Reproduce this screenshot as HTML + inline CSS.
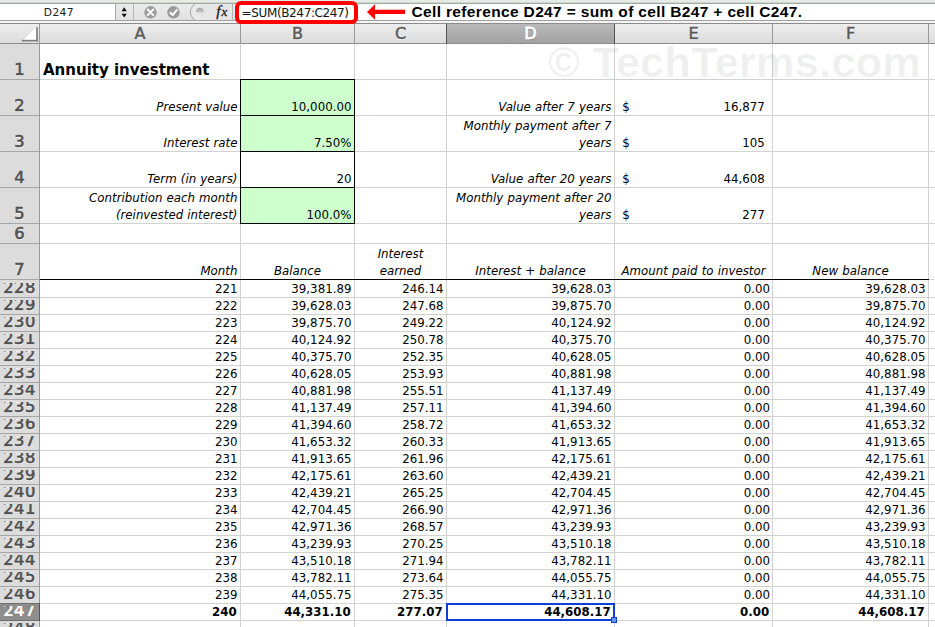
<!DOCTYPE html>
<html><head><meta charset="utf-8"><title>Annuity investment</title>
<style>
html,body{margin:0;padding:0;}
body{width:935px;height:627px;overflow:hidden;background:#fff;position:relative;font-family:"DejaVu Sans","Liberation Sans",sans-serif;color:#000;}
div{position:absolute;box-sizing:border-box;}
.t{line-height:20px;height:20px;white-space:nowrap;}
.i{font-style:italic;word-spacing:0.4px;}
.b{font-weight:bold;}
.vl{width:1px;background:#d2d2d2;}
.hl{height:1px;background:#d2d2d2;}
.ch{color:#5a5a5a;text-shadow:0 1px 0 #fff;-webkit-text-stroke:0.5px #5a5a5a;}
.rh{color:#505050;text-shadow:0 1px 0 #fff;-webkit-text-stroke:0.6px #505050;letter-spacing:0.55px;}
.wm{font-family:"Liberation Sans",sans-serif;font-weight:bold;color:rgba(0,0,0,0.065);}
.note{font-family:"Liberation Sans",sans-serif;font-weight:bold;color:#000;}
</style></head><body>

<div class="vl" style="left:240px;top:44px;height:583px"></div>
<div class="vl" style="left:354px;top:44px;height:583px"></div>
<div class="vl" style="left:446px;top:44px;height:583px"></div>
<div class="vl" style="left:614px;top:44px;height:583px"></div>
<div class="vl" style="left:772px;top:44px;height:583px"></div>
<div class="vl" style="left:928px;top:44px;height:583px"></div>
<div class="hl" style="left:40px;top:79px;width:895px"></div>
<div class="hl" style="left:40px;top:115px;width:895px"></div>
<div class="hl" style="left:40px;top:151px;width:895px"></div>
<div class="hl" style="left:40px;top:187px;width:895px"></div>
<div class="hl" style="left:40px;top:223px;width:895px"></div>
<div class="hl" style="left:40px;top:243px;width:895px"></div>
<div class="hl" style="left:40px;top:279px;width:895px"></div>
<div class="hl" style="left:40px;top:297px;width:895px"></div>
<div class="hl" style="left:40px;top:314px;width:895px"></div>
<div class="hl" style="left:40px;top:331px;width:895px"></div>
<div class="hl" style="left:40px;top:348px;width:895px"></div>
<div class="hl" style="left:40px;top:365px;width:895px"></div>
<div class="hl" style="left:40px;top:382px;width:895px"></div>
<div class="hl" style="left:40px;top:399px;width:895px"></div>
<div class="hl" style="left:40px;top:416px;width:895px"></div>
<div class="hl" style="left:40px;top:433px;width:895px"></div>
<div class="hl" style="left:40px;top:450px;width:895px"></div>
<div class="hl" style="left:40px;top:467px;width:895px"></div>
<div class="hl" style="left:40px;top:484px;width:895px"></div>
<div class="hl" style="left:40px;top:501px;width:895px"></div>
<div class="hl" style="left:40px;top:518px;width:895px"></div>
<div class="hl" style="left:40px;top:535px;width:895px"></div>
<div class="hl" style="left:40px;top:552px;width:895px"></div>
<div class="hl" style="left:40px;top:569px;width:895px"></div>
<div class="hl" style="left:40px;top:586px;width:895px"></div>
<div class="hl" style="left:40px;top:603px;width:895px"></div>
<div class="hl" style="left:40px;top:620px;width:895px"></div>
<div style="left:240px;top:79px;width:115px;height:145px;background:#000"></div>
<div style="left:241px;top:80px;width:113px;height:35px;background:#ccffcc"></div>
<div style="left:241px;top:116px;width:113px;height:35px;background:#ccffcc"></div>
<div style="left:241px;top:152px;width:113px;height:35px;background:#fff"></div>
<div style="left:241px;top:188px;width:113px;height:35px;background:#ccffcc"></div>
<div style="left:40px;top:279px;width:889px;height:1px;background:#000"></div>
<div class="t b" style="top:59.51px;font-size:15px;left:43.00px;">Annuity investment</div>
<div class="t i" style="top:96.62px;font-size:11.8px;right:697.60px;">Present value</div>
<div class="t i" style="top:132.62px;font-size:11.8px;right:697.60px;">Interest rate</div>
<div class="t i" style="top:168.62px;font-size:11.8px;right:697.60px;">Term (in years)</div>
<div class="t i" style="top:187.62px;font-size:11.8px;right:697.60px;">Contribution each month</div>
<div class="t i" style="top:204.62px;font-size:11.8px;right:697.60px;">(reinvested interest)</div>
<div class="t " style="top:96.62px;font-size:11.8px;right:583.60px;">10,000.00</div>
<div class="t " style="top:132.62px;font-size:11.8px;right:583.60px;">7.50%</div>
<div class="t " style="top:168.62px;font-size:11.8px;right:583.60px;">20</div>
<div class="t " style="top:204.62px;font-size:11.8px;right:583.60px;">100.0%</div>
<div class="t i" style="top:96.62px;font-size:11.8px;right:323.60px;">Value after 7 years</div>
<div class="t i" style="top:115.62px;font-size:11.8px;right:323.60px;">Monthly payment after 7</div>
<div class="t i" style="top:132.62px;font-size:11.8px;right:323.60px;">years</div>
<div class="t i" style="top:168.62px;font-size:11.8px;right:323.60px;">Value after 20 years</div>
<div class="t i" style="top:187.62px;font-size:11.8px;right:323.60px;">Monthly payment after 20</div>
<div class="t i" style="top:204.62px;font-size:11.8px;right:323.60px;">years</div>
<div class="t " style="top:96.62px;font-size:11.8px;left:622.20px;">$</div>
<div class="t " style="top:96.62px;font-size:11.8px;right:170.30px;">16,877</div>
<div class="t " style="top:132.62px;font-size:11.8px;left:622.20px;">$</div>
<div class="t " style="top:132.62px;font-size:11.8px;right:170.30px;">105</div>
<div class="t " style="top:168.62px;font-size:11.8px;left:622.20px;">$</div>
<div class="t " style="top:168.62px;font-size:11.8px;right:170.30px;">44,608</div>
<div class="t " style="top:204.62px;font-size:11.8px;left:622.20px;">$</div>
<div class="t " style="top:204.62px;font-size:11.8px;right:170.30px;">277</div>
<div class="t i" style="top:260.62px;font-size:11.8px;right:697.60px;">Month</div>
<div class="t i" style="top:260.62px;font-size:11.8px;left:97.50px;width:400px;text-align:center;">Balance</div>
<div class="t i" style="top:243.62px;font-size:11.8px;left:200.50px;width:400px;text-align:center;">Interest</div>
<div class="t i" style="top:260.62px;font-size:11.8px;left:200.50px;width:400px;text-align:center;">earned</div>
<div class="t i" style="top:260.62px;font-size:11.8px;left:330.50px;width:400px;text-align:center;">Interest + balance</div>
<div class="t i" style="top:260.62px;font-size:11.8px;left:493.50px;width:400px;text-align:center;">Amount paid to investor</div>
<div class="t i" style="top:260.62px;font-size:11.8px;left:650.50px;width:400px;text-align:center;">New balance</div>
<div class="t " style="top:278.62px;font-size:11.8px;right:697.60px;">221</div>
<div class="t " style="top:278.62px;font-size:11.8px;right:583.60px;">39,381.89</div>
<div class="t " style="top:278.62px;font-size:11.8px;right:491.60px;">246.14</div>
<div class="t " style="top:278.62px;font-size:11.8px;right:323.60px;">39,628.03</div>
<div class="t " style="top:278.62px;font-size:11.8px;right:165.00px;">0.00</div>
<div class="t " style="top:278.62px;font-size:11.8px;right:9.60px;">39,628.03</div>
<div class="t " style="top:295.62px;font-size:11.8px;right:697.60px;">222</div>
<div class="t " style="top:295.62px;font-size:11.8px;right:583.60px;">39,628.03</div>
<div class="t " style="top:295.62px;font-size:11.8px;right:491.60px;">247.68</div>
<div class="t " style="top:295.62px;font-size:11.8px;right:323.60px;">39,875.70</div>
<div class="t " style="top:295.62px;font-size:11.8px;right:165.00px;">0.00</div>
<div class="t " style="top:295.62px;font-size:11.8px;right:9.60px;">39,875.70</div>
<div class="t " style="top:312.62px;font-size:11.8px;right:697.60px;">223</div>
<div class="t " style="top:312.62px;font-size:11.8px;right:583.60px;">39,875.70</div>
<div class="t " style="top:312.62px;font-size:11.8px;right:491.60px;">249.22</div>
<div class="t " style="top:312.62px;font-size:11.8px;right:323.60px;">40,124.92</div>
<div class="t " style="top:312.62px;font-size:11.8px;right:165.00px;">0.00</div>
<div class="t " style="top:312.62px;font-size:11.8px;right:9.60px;">40,124.92</div>
<div class="t " style="top:329.62px;font-size:11.8px;right:697.60px;">224</div>
<div class="t " style="top:329.62px;font-size:11.8px;right:583.60px;">40,124.92</div>
<div class="t " style="top:329.62px;font-size:11.8px;right:491.60px;">250.78</div>
<div class="t " style="top:329.62px;font-size:11.8px;right:323.60px;">40,375.70</div>
<div class="t " style="top:329.62px;font-size:11.8px;right:165.00px;">0.00</div>
<div class="t " style="top:329.62px;font-size:11.8px;right:9.60px;">40,375.70</div>
<div class="t " style="top:346.62px;font-size:11.8px;right:697.60px;">225</div>
<div class="t " style="top:346.62px;font-size:11.8px;right:583.60px;">40,375.70</div>
<div class="t " style="top:346.62px;font-size:11.8px;right:491.60px;">252.35</div>
<div class="t " style="top:346.62px;font-size:11.8px;right:323.60px;">40,628.05</div>
<div class="t " style="top:346.62px;font-size:11.8px;right:165.00px;">0.00</div>
<div class="t " style="top:346.62px;font-size:11.8px;right:9.60px;">40,628.05</div>
<div class="t " style="top:363.62px;font-size:11.8px;right:697.60px;">226</div>
<div class="t " style="top:363.62px;font-size:11.8px;right:583.60px;">40,628.05</div>
<div class="t " style="top:363.62px;font-size:11.8px;right:491.60px;">253.93</div>
<div class="t " style="top:363.62px;font-size:11.8px;right:323.60px;">40,881.98</div>
<div class="t " style="top:363.62px;font-size:11.8px;right:165.00px;">0.00</div>
<div class="t " style="top:363.62px;font-size:11.8px;right:9.60px;">40,881.98</div>
<div class="t " style="top:380.62px;font-size:11.8px;right:697.60px;">227</div>
<div class="t " style="top:380.62px;font-size:11.8px;right:583.60px;">40,881.98</div>
<div class="t " style="top:380.62px;font-size:11.8px;right:491.60px;">255.51</div>
<div class="t " style="top:380.62px;font-size:11.8px;right:323.60px;">41,137.49</div>
<div class="t " style="top:380.62px;font-size:11.8px;right:165.00px;">0.00</div>
<div class="t " style="top:380.62px;font-size:11.8px;right:9.60px;">41,137.49</div>
<div class="t " style="top:397.62px;font-size:11.8px;right:697.60px;">228</div>
<div class="t " style="top:397.62px;font-size:11.8px;right:583.60px;">41,137.49</div>
<div class="t " style="top:397.62px;font-size:11.8px;right:491.60px;">257.11</div>
<div class="t " style="top:397.62px;font-size:11.8px;right:323.60px;">41,394.60</div>
<div class="t " style="top:397.62px;font-size:11.8px;right:165.00px;">0.00</div>
<div class="t " style="top:397.62px;font-size:11.8px;right:9.60px;">41,394.60</div>
<div class="t " style="top:414.62px;font-size:11.8px;right:697.60px;">229</div>
<div class="t " style="top:414.62px;font-size:11.8px;right:583.60px;">41,394.60</div>
<div class="t " style="top:414.62px;font-size:11.8px;right:491.60px;">258.72</div>
<div class="t " style="top:414.62px;font-size:11.8px;right:323.60px;">41,653.32</div>
<div class="t " style="top:414.62px;font-size:11.8px;right:165.00px;">0.00</div>
<div class="t " style="top:414.62px;font-size:11.8px;right:9.60px;">41,653.32</div>
<div class="t " style="top:431.62px;font-size:11.8px;right:697.60px;">230</div>
<div class="t " style="top:431.62px;font-size:11.8px;right:583.60px;">41,653.32</div>
<div class="t " style="top:431.62px;font-size:11.8px;right:491.60px;">260.33</div>
<div class="t " style="top:431.62px;font-size:11.8px;right:323.60px;">41,913.65</div>
<div class="t " style="top:431.62px;font-size:11.8px;right:165.00px;">0.00</div>
<div class="t " style="top:431.62px;font-size:11.8px;right:9.60px;">41,913.65</div>
<div class="t " style="top:448.62px;font-size:11.8px;right:697.60px;">231</div>
<div class="t " style="top:448.62px;font-size:11.8px;right:583.60px;">41,913.65</div>
<div class="t " style="top:448.62px;font-size:11.8px;right:491.60px;">261.96</div>
<div class="t " style="top:448.62px;font-size:11.8px;right:323.60px;">42,175.61</div>
<div class="t " style="top:448.62px;font-size:11.8px;right:165.00px;">0.00</div>
<div class="t " style="top:448.62px;font-size:11.8px;right:9.60px;">42,175.61</div>
<div class="t " style="top:465.62px;font-size:11.8px;right:697.60px;">232</div>
<div class="t " style="top:465.62px;font-size:11.8px;right:583.60px;">42,175.61</div>
<div class="t " style="top:465.62px;font-size:11.8px;right:491.60px;">263.60</div>
<div class="t " style="top:465.62px;font-size:11.8px;right:323.60px;">42,439.21</div>
<div class="t " style="top:465.62px;font-size:11.8px;right:165.00px;">0.00</div>
<div class="t " style="top:465.62px;font-size:11.8px;right:9.60px;">42,439.21</div>
<div class="t " style="top:482.62px;font-size:11.8px;right:697.60px;">233</div>
<div class="t " style="top:482.62px;font-size:11.8px;right:583.60px;">42,439.21</div>
<div class="t " style="top:482.62px;font-size:11.8px;right:491.60px;">265.25</div>
<div class="t " style="top:482.62px;font-size:11.8px;right:323.60px;">42,704.45</div>
<div class="t " style="top:482.62px;font-size:11.8px;right:165.00px;">0.00</div>
<div class="t " style="top:482.62px;font-size:11.8px;right:9.60px;">42,704.45</div>
<div class="t " style="top:499.62px;font-size:11.8px;right:697.60px;">234</div>
<div class="t " style="top:499.62px;font-size:11.8px;right:583.60px;">42,704.45</div>
<div class="t " style="top:499.62px;font-size:11.8px;right:491.60px;">266.90</div>
<div class="t " style="top:499.62px;font-size:11.8px;right:323.60px;">42,971.36</div>
<div class="t " style="top:499.62px;font-size:11.8px;right:165.00px;">0.00</div>
<div class="t " style="top:499.62px;font-size:11.8px;right:9.60px;">42,971.36</div>
<div class="t " style="top:516.62px;font-size:11.8px;right:697.60px;">235</div>
<div class="t " style="top:516.62px;font-size:11.8px;right:583.60px;">42,971.36</div>
<div class="t " style="top:516.62px;font-size:11.8px;right:491.60px;">268.57</div>
<div class="t " style="top:516.62px;font-size:11.8px;right:323.60px;">43,239.93</div>
<div class="t " style="top:516.62px;font-size:11.8px;right:165.00px;">0.00</div>
<div class="t " style="top:516.62px;font-size:11.8px;right:9.60px;">43,239.93</div>
<div class="t " style="top:533.62px;font-size:11.8px;right:697.60px;">236</div>
<div class="t " style="top:533.62px;font-size:11.8px;right:583.60px;">43,239.93</div>
<div class="t " style="top:533.62px;font-size:11.8px;right:491.60px;">270.25</div>
<div class="t " style="top:533.62px;font-size:11.8px;right:323.60px;">43,510.18</div>
<div class="t " style="top:533.62px;font-size:11.8px;right:165.00px;">0.00</div>
<div class="t " style="top:533.62px;font-size:11.8px;right:9.60px;">43,510.18</div>
<div class="t " style="top:550.62px;font-size:11.8px;right:697.60px;">237</div>
<div class="t " style="top:550.62px;font-size:11.8px;right:583.60px;">43,510.18</div>
<div class="t " style="top:550.62px;font-size:11.8px;right:491.60px;">271.94</div>
<div class="t " style="top:550.62px;font-size:11.8px;right:323.60px;">43,782.11</div>
<div class="t " style="top:550.62px;font-size:11.8px;right:165.00px;">0.00</div>
<div class="t " style="top:550.62px;font-size:11.8px;right:9.60px;">43,782.11</div>
<div class="t " style="top:567.62px;font-size:11.8px;right:697.60px;">238</div>
<div class="t " style="top:567.62px;font-size:11.8px;right:583.60px;">43,782.11</div>
<div class="t " style="top:567.62px;font-size:11.8px;right:491.60px;">273.64</div>
<div class="t " style="top:567.62px;font-size:11.8px;right:323.60px;">44,055.75</div>
<div class="t " style="top:567.62px;font-size:11.8px;right:165.00px;">0.00</div>
<div class="t " style="top:567.62px;font-size:11.8px;right:9.60px;">44,055.75</div>
<div class="t " style="top:584.62px;font-size:11.8px;right:697.60px;">239</div>
<div class="t " style="top:584.62px;font-size:11.8px;right:583.60px;">44,055.75</div>
<div class="t " style="top:584.62px;font-size:11.8px;right:491.60px;">275.35</div>
<div class="t " style="top:584.62px;font-size:11.8px;right:323.60px;">44,331.10</div>
<div class="t " style="top:584.62px;font-size:11.8px;right:165.00px;">0.00</div>
<div class="t " style="top:584.62px;font-size:11.8px;right:9.60px;">44,331.10</div>
<div class="t b" style="top:601.62px;font-size:11.8px;right:698.40px;">240</div>
<div class="t b" style="top:601.62px;font-size:11.8px;right:584.40px;">44,331.10</div>
<div class="t b" style="top:601.62px;font-size:11.8px;right:492.40px;">277.07</div>
<div class="t b" style="top:601.62px;font-size:11.8px;right:324.40px;">44,608.17</div>
<div class="t b" style="top:601.62px;font-size:11.8px;right:165.80px;">0.00</div>
<div class="t b" style="top:601.62px;font-size:11.8px;right:10.40px;">44,608.17</div>
<div class="t wm" style="top:52.32px;font-size:43px;left:548.00px;letter-spacing:0.4px;line-height:20px;">© TechTerms.com</div>
<div style="left:446px;top:603px;width:169px;height:18px;border:2px solid #0b40d2"></div>
<div style="left:611px;top:617px;width:6px;height:6px;background:#5f9be6;border:1.5px solid #0b40d2"></div>
<div style="left:0;top:44px;width:39px;height:583px;background:#dcdcdc"></div>
<div style="left:39px;top:24px;width:1px;height:603px;background:#999"></div>
<div style="left:0;top:79px;width:39px;height:1px;background:#a6a6a6"></div>
<div style="left:0;top:115px;width:39px;height:1px;background:#a6a6a6"></div>
<div style="left:0;top:151px;width:39px;height:1px;background:#a6a6a6"></div>
<div style="left:0;top:187px;width:39px;height:1px;background:#a6a6a6"></div>
<div style="left:0;top:223px;width:39px;height:1px;background:#a6a6a6"></div>
<div style="left:0;top:243px;width:39px;height:1px;background:#a6a6a6"></div>
<div style="left:0;top:279px;width:39px;height:1px;background:#a6a6a6"></div>
<div style="left:0;top:297px;width:39px;height:1px;background:#a6a6a6"></div>
<div style="left:0;top:314px;width:39px;height:1px;background:#a6a6a6"></div>
<div style="left:0;top:331px;width:39px;height:1px;background:#a6a6a6"></div>
<div style="left:0;top:348px;width:39px;height:1px;background:#a6a6a6"></div>
<div style="left:0;top:365px;width:39px;height:1px;background:#a6a6a6"></div>
<div style="left:0;top:382px;width:39px;height:1px;background:#a6a6a6"></div>
<div style="left:0;top:399px;width:39px;height:1px;background:#a6a6a6"></div>
<div style="left:0;top:416px;width:39px;height:1px;background:#a6a6a6"></div>
<div style="left:0;top:433px;width:39px;height:1px;background:#a6a6a6"></div>
<div style="left:0;top:450px;width:39px;height:1px;background:#a6a6a6"></div>
<div style="left:0;top:467px;width:39px;height:1px;background:#a6a6a6"></div>
<div style="left:0;top:484px;width:39px;height:1px;background:#a6a6a6"></div>
<div style="left:0;top:501px;width:39px;height:1px;background:#a6a6a6"></div>
<div style="left:0;top:518px;width:39px;height:1px;background:#a6a6a6"></div>
<div style="left:0;top:535px;width:39px;height:1px;background:#a6a6a6"></div>
<div style="left:0;top:552px;width:39px;height:1px;background:#a6a6a6"></div>
<div style="left:0;top:569px;width:39px;height:1px;background:#a6a6a6"></div>
<div style="left:0;top:586px;width:39px;height:1px;background:#a6a6a6"></div>
<div style="left:0;top:603px;width:39px;height:1px;background:#a6a6a6"></div>
<div style="left:0;top:620px;width:39px;height:1px;background:#a6a6a6"></div>
<div class="t rh" style="top:59.96px;font-size:16.3px;left:-180.20px;width:400px;text-align:center;">1</div>
<div class="t rh" style="top:95.96px;font-size:16.3px;left:-180.20px;width:400px;text-align:center;">2</div>
<div class="t rh" style="top:131.96px;font-size:16.3px;left:-180.20px;width:400px;text-align:center;">3</div>
<div class="t rh" style="top:167.96px;font-size:16.3px;left:-180.20px;width:400px;text-align:center;">4</div>
<div class="t rh" style="top:203.96px;font-size:16.3px;left:-180.20px;width:400px;text-align:center;">5</div>
<div class="t rh" style="top:223.96px;font-size:16.3px;left:-180.20px;width:400px;text-align:center;">6</div>
<div class="t rh" style="top:259.96px;font-size:16.3px;left:-180.20px;width:400px;text-align:center;">7</div>
<div style="left:0;top:283px;width:39px;height:14px;overflow:hidden">
<div class="t rh" style="left:0;width:39px;text-align:center;top:-5.04px;font-size:16.3px;">228</div></div>
<div style="left:0;top:300px;width:39px;height:14px;overflow:hidden">
<div class="t rh" style="left:0;width:39px;text-align:center;top:-5.04px;font-size:16.3px;">229</div></div>
<div style="left:0;top:317px;width:39px;height:14px;overflow:hidden">
<div class="t rh" style="left:0;width:39px;text-align:center;top:-5.04px;font-size:16.3px;">230</div></div>
<div style="left:0;top:334px;width:39px;height:14px;overflow:hidden">
<div class="t rh" style="left:0;width:39px;text-align:center;top:-5.04px;font-size:16.3px;">231</div></div>
<div style="left:0;top:351px;width:39px;height:14px;overflow:hidden">
<div class="t rh" style="left:0;width:39px;text-align:center;top:-5.04px;font-size:16.3px;">232</div></div>
<div style="left:0;top:368px;width:39px;height:14px;overflow:hidden">
<div class="t rh" style="left:0;width:39px;text-align:center;top:-5.04px;font-size:16.3px;">233</div></div>
<div style="left:0;top:385px;width:39px;height:14px;overflow:hidden">
<div class="t rh" style="left:0;width:39px;text-align:center;top:-5.04px;font-size:16.3px;">234</div></div>
<div style="left:0;top:402px;width:39px;height:14px;overflow:hidden">
<div class="t rh" style="left:0;width:39px;text-align:center;top:-5.04px;font-size:16.3px;">235</div></div>
<div style="left:0;top:419px;width:39px;height:14px;overflow:hidden">
<div class="t rh" style="left:0;width:39px;text-align:center;top:-5.04px;font-size:16.3px;">236</div></div>
<div style="left:0;top:436px;width:39px;height:14px;overflow:hidden">
<div class="t rh" style="left:0;width:39px;text-align:center;top:-5.04px;font-size:16.3px;">237</div></div>
<div style="left:0;top:453px;width:39px;height:14px;overflow:hidden">
<div class="t rh" style="left:0;width:39px;text-align:center;top:-5.04px;font-size:16.3px;">238</div></div>
<div style="left:0;top:470px;width:39px;height:14px;overflow:hidden">
<div class="t rh" style="left:0;width:39px;text-align:center;top:-5.04px;font-size:16.3px;">239</div></div>
<div style="left:0;top:487px;width:39px;height:14px;overflow:hidden">
<div class="t rh" style="left:0;width:39px;text-align:center;top:-5.04px;font-size:16.3px;">240</div></div>
<div style="left:0;top:504px;width:39px;height:14px;overflow:hidden">
<div class="t rh" style="left:0;width:39px;text-align:center;top:-5.04px;font-size:16.3px;">241</div></div>
<div style="left:0;top:521px;width:39px;height:14px;overflow:hidden">
<div class="t rh" style="left:0;width:39px;text-align:center;top:-5.04px;font-size:16.3px;">242</div></div>
<div style="left:0;top:538px;width:39px;height:14px;overflow:hidden">
<div class="t rh" style="left:0;width:39px;text-align:center;top:-5.04px;font-size:16.3px;">243</div></div>
<div style="left:0;top:555px;width:39px;height:14px;overflow:hidden">
<div class="t rh" style="left:0;width:39px;text-align:center;top:-5.04px;font-size:16.3px;">244</div></div>
<div style="left:0;top:572px;width:39px;height:14px;overflow:hidden">
<div class="t rh" style="left:0;width:39px;text-align:center;top:-5.04px;font-size:16.3px;">245</div></div>
<div style="left:0;top:589px;width:39px;height:14px;overflow:hidden">
<div class="t rh" style="left:0;width:39px;text-align:center;top:-5.04px;font-size:16.3px;">246</div></div>
<div style="left:0;top:604px;width:39px;height:16px;background:#8e8e8e"></div>
<div style="left:0;top:606px;width:39px;height:14px;overflow:hidden">
<div class="t rh" style="left:0;width:39px;text-align:center;top:-5.04px;font-size:16.3px;color:#fff;text-shadow:0 1px 1px #555;-webkit-text-stroke:0.7px #fff;">247</div></div>
<div style="left:0;top:623px;width:39px;height:14px;overflow:hidden">
<div class="t rh" style="left:0;width:39px;text-align:center;top:-5.04px;font-size:16.3px;">248</div></div>
<div style="left:39px;top:603px;width:1px;height:18px;background:#555"></div>
<div style="left:0;top:603px;width:39px;height:1px;background:#6e6e6e"></div>
<div style="left:0;top:620px;width:39px;height:1px;background:#6e6e6e"></div>
<div style="left:0;top:24px;width:935px;height:19px;background:linear-gradient(#ededed,#dcdcdc)"></div>
<div style="left:447px;top:24px;width:167px;height:19px;background:linear-gradient(#b9b9b9,#a2a2a2)"></div>
<div style="left:0;top:43px;width:935px;height:1px;background:#8c8c8c"></div>
<div style="left:0;top:23px;width:935px;height:1px;background:#8c8c8c"></div>
<div style="left:39px;top:24px;width:1px;height:20px;background:#999"></div>
<div style="left:240px;top:24px;width:1px;height:20px;background:#999"></div>
<div style="left:354px;top:24px;width:1px;height:20px;background:#999"></div>
<div style="left:446px;top:24px;width:1px;height:20px;background:#555"></div>
<div style="left:614px;top:24px;width:1px;height:20px;background:#555"></div>
<div style="left:772px;top:24px;width:1px;height:20px;background:#999"></div>
<div style="left:928px;top:24px;width:1px;height:20px;background:#999"></div>
<div class="t ch" style="top:24.06px;font-size:16px;left:-60.00px;width:400px;text-align:center;">A</div>
<div class="t ch" style="top:24.06px;font-size:16px;left:97.50px;width:400px;text-align:center;">B</div>
<div class="t ch" style="top:24.06px;font-size:16px;left:200.50px;width:400px;text-align:center;">C</div>
<div class="t ch" style="top:24.06px;font-size:16px;left:330.50px;width:400px;text-align:center;color:#fff;text-shadow:0 1px 1px #666;-webkit-text-stroke:0.8px #fff;">D</div>
<div class="t ch" style="top:24.06px;font-size:16px;left:493.50px;width:400px;text-align:center;">E</div>
<div class="t ch" style="top:24.06px;font-size:16px;left:650.50px;width:400px;text-align:center;">F</div>
<svg style="position:absolute;left:0;top:24px" width="39" height="19"><polygon points="36.2,3.3 36.2,16 23.3,16" fill="#fff"/><rect x="36.2" y="3" width="1.6" height="14.4" fill="#7c7c7c"/><rect x="21.8" y="15.8" width="16" height="1.6" fill="#7c7c7c"/></svg>
<div style="left:0;top:0;width:935px;height:23px;background:#e9e9e9"></div>
<div style="left:0;top:4px;width:935px;height:16px;background:linear-gradient(#ebebeb,#e1e1e1)"></div>
<div style="left:0;top:2px;width:935px;height:1px;background:#bfe0c4"></div>
<div style="left:0;top:3px;width:935px;height:1px;background:#a9a9a9"></div>
<div style="left:0;top:20px;width:935px;height:1px;background:#a0a0a0"></div>
<div style="left:0;top:21px;width:935px;height:2px;background:#f4f4f4"></div>
<div style="left:0;top:4px;width:115px;height:16px;background:#fff"></div>
<div style="left:115px;top:4px;width:1px;height:16px;background:#a9a9a9"></div>
<div style="left:133px;top:4px;width:1px;height:16px;background:#b5b5b5"></div>
<div style="left:232px;top:4px;width:1px;height:16px;background:#b5b5b5"></div>
<div style="left:235px;top:4px;width:700px;height:16px;background:#fff"></div>
<div class="t " style="top:2.50px;font-size:10.7px;left:-141.20px;width:400px;text-align:center;color:#1a1a1a;letter-spacing:0.35px">D247</div>
<svg style="position:absolute;left:116px;top:0" width="120" height="24" viewBox="116 0 120 24">
<defs><linearGradient id="og" x1="0" y1="0" x2="0" y2="1"><stop offset="0" stop-color="#a9a9a9"/><stop offset="0.5" stop-color="#bdbdbd"/><stop offset="0.55" stop-color="#dcdcdc"/><stop offset="1" stop-color="#e6e6e6"/></linearGradient>
<clipPath id="pc"><rect x="186" y="4" width="30" height="16"/></clipPath></defs>
<polygon points="124.2,7.2 126.8,11.2 121.6,11.2" fill="#111"/><polygon points="124.2,17.6 126.8,13.8 121.6,13.8" fill="#111"/>
<circle cx="150.5" cy="12.3" r="6.2" fill="#9b9b9b"/><path d="M147.7 9.5 L153.3 15.1 M153.3 9.5 L147.7 15.1" stroke="#fff" stroke-width="2" stroke-linecap="round"/>
<circle cx="173.5" cy="12.3" r="6.2" fill="#9b9b9b"/><path d="M170.4 12.7 L172.7 15 L176.9 9.9" stroke="#fff" stroke-width="2" fill="none" stroke-linecap="round" stroke-linejoin="round"/>
<g clip-path="url(#pc)"><path d="M200 2.4 A9.6 9.6 0 0 0 200 21.6 L236 21.6 L236 2.4 Z" fill="#eaeaea" stroke="#a8a8a8" stroke-width="1"/></g>
<rect x="201" y="4" width="31" height="16" fill="#e6e6e6"/>
<ellipse cx="199.9" cy="11.7" rx="4" ry="3.9" fill="url(#og)"/>
</svg>
<div class="t " style="top:1.44px;font-size:15.5px;left:216.30px;font-family:'Liberation Serif',serif;color:#1a1a1a;font-style:italic;-webkit-text-stroke:0.3px #1a1a1a;"><span style="font-size:15.5px">f</span><span style="font-size:13px;margin-left:0.8px">x</span></div>
<div style="left:235px;top:1px;width:123px;height:23px;border:4px solid #ff0000;border-radius:6px;background:#fff"></div>
<div class="t " style="top:2.65px;font-size:12px;left:241.60px;color:#111;letter-spacing:-0.37px">=SUM(B247:C247)</div>
<svg style="position:absolute;left:360px;top:0" width="50" height="24" viewBox="360 0 50 24"><polygon points="367,12 375,4.3 375,19.7" fill="#ff0000"/><rect x="374" y="9.7" width="31" height="4.3" fill="#ff0000"/></svg>
<div class="t note" style="top:2.04px;font-size:15.5px;left:411.50px;letter-spacing:0.35px">Cell reference D247 = sum of cell B247 + cell C247.</div>
</body></html>
